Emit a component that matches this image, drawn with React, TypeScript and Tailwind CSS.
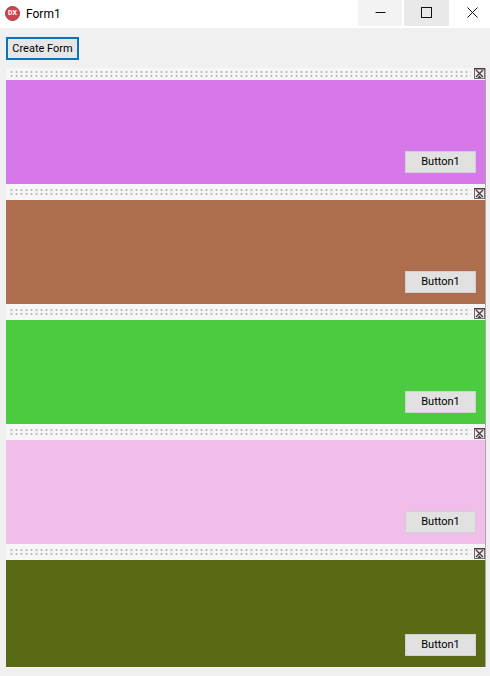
// App.tsx
const panels = [
  { color: "bg-[#d678ea]", grip: "h-3", body: "h-[104px]" },
  { color: "bg-[#ae6d4d]", grip: "h-4", body: "h-[104px]" },
  { color: "bg-[#4ccb40]", grip: "h-4", body: "h-[104px]" },
  { color: "bg-[#f1bdeb]", grip: "h-4", body: "h-[104px]" },
  { color: "bg-[#586a13]", grip: "h-4", body: "h-[107px]" },
];

function DxIcon() {
  return (
    <div className="flex h-[15px] w-[15px] items-center justify-center rounded-full border border-[#9c3f48] bg-[#d63f4c] text-[7px] font-bold leading-none text-white">
      DX
    </div>
  );
}

function CloseBox() {
  return (
    <svg width="11" height="11" viewBox="0 0 11 11" className="mb-px shrink-0 self-end">
      <rect x="0.5" y="0.5" width="10" height="10" fill="#ece8e8" stroke="#7a6a70" />
      <path d="M0 0.75 H11" stroke="#4a3c42" strokeWidth="1.5" />
      <path d="M2 2 L9 9 M9 2 L2 9" stroke="#4a3c42" strokeWidth="1.3" />
      <path d="M3.5 10 L5.5 7.5 L7.5 10 Z" fill="#3d3438" />
    </svg>
  );
}

function Panel({ color, grip, body }: { color: string; grip: string; body: string }) {
  return (
    <div>
      <div className={`flex items-center bg-[#f6f6f6] pl-[3px] ${grip}`}>
        <div className="mr-[3px] h-2 flex-1 bg-[radial-gradient(circle,#b8b8b8_0.8px,transparent_1.3px)] bg-[length:5px_4px]" />
        <CloseBox />
      </div>
      <div className={`flex items-end justify-end pb-[11px] pr-[9px] ${color} ${body}`}>
        <button className="h-[22px] w-[71px] whitespace-nowrap border border-[#d0d0d0] bg-[#e1e1e1] pt-px text-[11px] text-black">
          Button1
        </button>
      </div>
    </div>
  );
}

export default function App() {
  return (
    <div className="flex h-[676px] w-[490px] flex-col overflow-hidden bg-[#f0f0f0] font-['Roboto',sans-serif] text-black">
      {/* title bar */}
      <div className="flex h-7 items-start bg-white">
        <div className="flex h-[27px] flex-1 items-center gap-[6px] pl-[5px]">
          <DxIcon />
          <span className="text-xs">Form1</span>
        </div>
        <div className="mr-[2px] flex h-[26px] w-[44px] justify-center bg-[#f3f3f3] pt-[7px]">
          <svg width="11" height="11" viewBox="0 0 11 11">
            <path d="M0.5 5.5 H10.5" stroke="#111" fill="none" />
          </svg>
        </div>
        <div className="flex h-[26px] w-[45px] justify-center bg-[#e9e9e9] pt-[7px]">
          <svg width="11" height="11" viewBox="0 0 11 11">
            <rect x="0.5" y="0.5" width="10" height="10" stroke="#111" fill="none" />
          </svg>
        </div>
        <div className="flex h-[26px] w-[41px] justify-center bg-white pl-[5px] pt-[7px]">
          <svg width="11" height="11" viewBox="0 0 11 11">
            <path d="M0.5 0.5 L10.5 10.5 M10.5 0.5 L0.5 10.5" stroke="#111" fill="none" />
          </svg>
        </div>
      </div>

      {/* form body */}
      <div className="pl-[6px] pt-[9px]">
        <button className="block h-[23px] w-[73px] whitespace-nowrap border-2 border-[#0f72b8] bg-[#e6e6e6] pt-px text-[11px] text-black">
          Create Form
        </button>
        <div className="mt-2 w-[480px] border-r border-[#a8a8a8]">
          {panels.map((p, i) => (
            <Panel key={i} color={p.color} grip={p.grip} body={p.body} />
          ))}
        </div>
        <div className="h-px w-[480px] bg-white" />
      </div>
    </div>
  );
}
